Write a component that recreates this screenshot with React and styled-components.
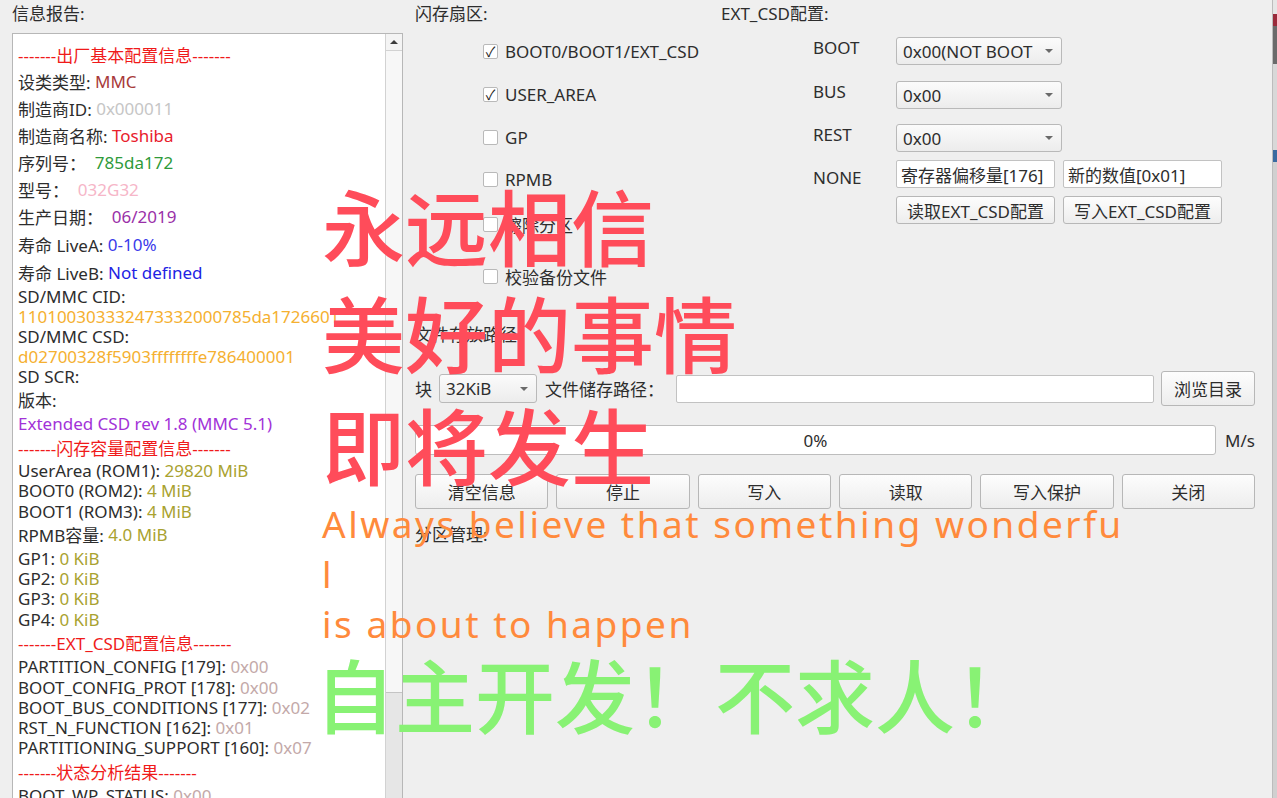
import React from "react";
import styled, { createGlobalStyle } from "styled-components";

const GlobalStyle = createGlobalStyle`
  html, body {
    margin: 0;
    padding: 0;
  }
  body {
    background: #efefef;
    font-family: "Noto Sans", "Noto Sans CJK SC", sans-serif;
    font-size: 17px;
    color: #2d2d2d;
    overflow: hidden;
  }
`;

const Window = styled.div`
  position: relative;
  display: flex;
  width: 1277px;
  height: 798px;
  overflow: hidden;
  background: #efefef;
`;

const LeftPane = styled.div`
  display: flex;
  flex-direction: column;
  flex-shrink: 0;
  width: 391px;
  padding-left: 12px;
`;

const PaneTitle = styled.div`
  flex-shrink: 0;
  height: 33px;
  line-height: 28px;
  white-space: nowrap;
`;

const TextBox = styled.div`
  display: flex;
  flex-shrink: 0;
  height: 800px;
  background: #fff;
  border: 1px solid #b7b7b7;
  border-bottom: none;
`;

const ReportText = styled.div`
  flex: 1;
  min-width: 0;
  overflow: hidden;
  padding: 7px 0 0 5px;
`;

const Line = styled.div`
  display: flex;
  align-items: center;
  height: ${(p) => p.h}px;
  white-space: nowrap;
  color: ${(p) => p.color || "#2d2d2d"};
`;

const Label = styled.span`
  white-space: pre;
`;

const Val = styled.span`
  color: ${(p) => p.color};
`;

const ScrollBar = styled.div`
  display: flex;
  flex-direction: column;
  width: 16px;
  border-left: 1px solid #d2d2d2;
  background: #e6e6e6;
`;

const ScrollArrow = styled.div`
  display: flex;
  align-items: center;
  justify-content: center;
  height: 16px;
  background: #f4f4f4;
  border-bottom: 1px solid #d2d2d2;
  &::after {
    content: "";
    border-left: 4px solid transparent;
    border-right: 4px solid transparent;
    border-bottom: 4px solid #3c3c3c;
  }
`;

const ScrollThumb = styled.div`
  height: 641px;
  background: #f7f7f7;
  border-bottom: 1px solid #c4c4c4;
`;

const Main = styled.div`
  display: flex;
  flex-direction: column;
  flex-shrink: 0;
  width: 840px;
  margin-left: 12px;
`;

const TopSection = styled.div`
  display: flex;
`;

const FlashCol = styled.div`
  display: flex;
  flex-direction: column;
  width: 306px;
`;

const ExtCol = styled.div`
  display: flex;
  flex-direction: column;
  flex: 1;
`;

const SectionTitle = styled.div`
  height: 30px;
  line-height: 28px;
  white-space: nowrap;
`;

const CheckList = styled.div`
  display: flex;
  flex-direction: column;
  padding-left: 68px;
`;

const CheckRow = styled.label`
  display: flex;
  align-items: center;
  gap: 7px;
  height: ${(p) => p.h}px;
  white-space: nowrap;
`;

const Box = styled.span`
  display: flex;
  align-items: center;
  justify-content: center;
  box-sizing: border-box;
  width: 15px;
  height: 15px;
  background: #fff;
  border: 1px solid #b9b9b9;
  border-radius: 2px;
  font-size: 14px;
  line-height: 1;
  color: #222;
`;

const ExtGrid = styled.div`
  display: grid;
  grid-template-columns: 75px 159px 159px;
  grid-template-rows: 44px 43px 36px 36px 28px;
  column-gap: 8px;
  margin: 7px 0 0 92px;
`;

const ExtLabel = styled.div`
  line-height: 22px;
  margin-top: ${(p) => p.top || 0}px;
  white-space: nowrap;
`;

const Combo = styled.div`
  display: flex;
  align-items: center;
  box-sizing: border-box;
  width: ${(p) => p.w}px;
  height: ${(p) => p.h || 28}px;
  padding: 0 8px 0 6px;
  border: 1px solid #b9b9b9;
  border-radius: 3px;
  background: linear-gradient(#fbfbfb, #ececec);
  white-space: nowrap;
  overflow: hidden;
  grid-column: ${(p) => p.span || "auto"};
  &::after {
    content: "";
    margin-left: auto;
    flex-shrink: 0;
    border-left: 4px solid transparent;
    border-right: 4px solid transparent;
    border-top: 4px solid #6a6a6a;
  }
`;

const ComboText = styled.span`
  overflow: hidden;
  margin-right: 8px;
`;

const Field = styled.div`
  display: flex;
  align-items: center;
  box-sizing: border-box;
  width: ${(p) => (p.w ? `${p.w}px` : "auto")};
  height: ${(p) => p.h || 28}px;
  padding-left: 4px;
  background: #fff;
  border: 1px solid #c2c2c2;
  border-radius: 2px;
  white-space: nowrap;
  overflow: hidden;
`;

const Button = styled.div`
  display: flex;
  align-items: center;
  justify-content: center;
  box-sizing: border-box;
  width: ${(p) => (p.w ? `${p.w}px` : "auto")};
  height: ${(p) => p.h}px;
  border: 1px solid #b7b7b7;
  border-radius: 3px;
  background: linear-gradient(#fdfdfd, #ededed);
  white-space: nowrap;
`;

const PlainText = styled.div`
  line-height: 20px;
  margin-top: ${(p) => p.top}px;
  white-space: nowrap;
`;

const PathRow = styled.div`
  display: flex;
  align-items: center;
  height: 35px;
  margin-top: 26px;
`;

const Gap = styled.span`
  flex-shrink: 0;
  width: ${(p) => p.w}px;
`;

const ProgressRow = styled.div`
  display: flex;
  align-items: center;
  margin-top: 19px;
  gap: 9px;
`;

const Progress = styled.div`
  display: flex;
  align-items: center;
  justify-content: center;
  box-sizing: border-box;
  width: 801px;
  height: 30px;
  background: #fff;
  border: 1px solid #bdbdbd;
  border-radius: 3px;
`;

const ButtonRow = styled.div`
  display: grid;
  grid-template-columns: repeat(6, 1fr);
  gap: 8px;
  margin-top: 19px;
`;

const EdgeStrip = styled.div`
  margin-left: auto;
  width: 4px;
  border-left: 1px solid #bcbcbc;
  background: linear-gradient(
    #e6e6e6 0 14px,
    #9a2a3a 14px 26px,
    #6a6a6a 26px 64px,
    #d8d8d8 64px 150px,
    #3a6aa0 150px 162px,
    #d0d0d0 162px 100%
  );
`;

const Overlay = styled.div`
  position: absolute;
  left: 322px;
  top: 183px;
  display: flex;
  flex-direction: column;
  pointer-events: none;
`;

const OverlayLine = styled.div`
  height: ${(p) => p.h}px;
  line-height: ${(p) => p.h}px;
  margin-top: ${(p) => p.top || 0}px;
  margin-left: ${(p) => p.shift || 0}px;
  font-size: ${(p) => p.size}px;
  font-weight: ${(p) => p.weight || 500};
  letter-spacing: ${(p) => p.spacing || 0}px;
  color: ${(p) => p.color};
  white-space: nowrap;
`;

const OverlayCjk = styled(OverlayLine)`
  line-height: 1;
  font-family: "Noto Sans CJK SC", sans-serif;
`;

const RED = "#f01a1a";
const OLIVE = "#a9a230";
const HEXV = "#c3a9a9";
const ORANGE = "#f5b030";

const report = [
  { h: 27, color: RED, text: "-------出厂基本配置信息-------" },
  { h: 27, label: "设类类型: ", value: "MMC", color: "#a83a3a" },
  { h: 27, label: "制造商ID: ", value: "0x000011", color: "#c6c6c6" },
  { h: 27, label: "制造商名称: ", value: "Toshiba", color: "#e8202c" },
  { h: 27, label: "序列号：  ", value: "785da172", color: "#2f9a3a" },
  { h: 27, label: "型号：  ", value: "032G32", color: "#f6b6c8" },
  { h: 27, label: "生产日期：  ", value: "06/2019", color: "#9a30a8" },
  { h: 28, label: "寿命 LiveA: ", value: "0-10%", color: "#3a3aea" },
  { h: 28, label: "寿命 LiveB: ", value: "Not defined", color: "#2222e4" },
  { h: 20, label: "SD/MMC CID:" },
  { h: 20, color: ORANGE, text: "110100303332473332000785da1726601" },
  { h: 20, label: "SD/MMC CSD:" },
  { h: 20, color: ORANGE, text: "d02700328f5903ffffffffe786400001" },
  { h: 20, label: "SD SCR:" },
  { h: 26, label: "版本:" },
  { h: 22, color: "#a232d8", text: "Extended CSD rev 1.8 (MMC 5.1)" },
  { h: 26, color: RED, text: "-------闪存容量配置信息-------" },
  { h: 20, label: "UserArea (ROM1): ", value: "29820 MiB", color: OLIVE },
  { h: 21, label: "BOOT0 (ROM2): ", value: "4 MiB", color: OLIVE },
  { h: 20, label: "BOOT1 (ROM3): ", value: "4 MiB", color: OLIVE },
  { h: 27, label: "RPMB容量: ", value: "4.0 MiB", color: OLIVE },
  { h: 20, label: "GP1: ", value: "0 KiB", color: OLIVE },
  { h: 20, label: "GP2: ", value: "0 KiB", color: OLIVE },
  { h: 21, label: "GP3: ", value: "0 KiB", color: OLIVE },
  { h: 20, label: "GP4: ", value: "0 KiB", color: OLIVE },
  { h: 26, color: RED, text: "-------EXT_CSD配置信息-------" },
  { h: 22, label: "PARTITION_CONFIG [179]: ", value: "0x00", color: HEXV },
  { h: 20, label: "BOOT_CONFIG_PROT [178]: ", value: "0x00", color: HEXV },
  { h: 20, label: "BOOT_BUS_CONDITIONS [177]: ", value: "0x02", color: HEXV },
  { h: 20, label: "RST_N_FUNCTION [162]: ", value: "0x01", color: HEXV },
  { h: 20, label: "PARTITIONING_SUPPORT [160]: ", value: "0x07", color: HEXV },
  { h: 28, color: RED, text: "-------状态分析结果-------" },
  { h: 20, label: "BOOT_WP_STATUS: ", value: "0x00", color: HEXV },
];

const partitions = [
  { name: "BOOT0/BOOT1/EXT_CSD", checked: true, h: 43 },
  { name: "USER_AREA", checked: true, h: 43 },
  { name: "GP", h: 42 },
  { name: "RPMB", h: 43 },
  { name: "擦除分区", h: 46 },
  { name: "校验备份文件", h: 58 },
];

const actions = ["清空信息", "停止", "写入", "读取", "写入保护", "关闭"];

export default function App() {
  return (
    <>
      <GlobalStyle />
      <Window>
        <LeftPane>
          <PaneTitle>信息报告:</PaneTitle>
          <TextBox>
            <ReportText>
              {report.map((r, i) =>
                r.text ? (
                  <Line key={i} h={r.h} color={r.color}>
                    {r.text}
                  </Line>
                ) : (
                  <Line key={i} h={r.h}>
                    <Label>{r.label}</Label>
                    {r.value && <Val color={r.color}>{r.value}</Val>}
                  </Line>
                )
              )}
            </ReportText>
            <ScrollBar>
              <ScrollArrow />
              <ScrollThumb />
            </ScrollBar>
          </TextBox>
        </LeftPane>

        <Main>
          <TopSection>
            <FlashCol>
              <SectionTitle>闪存扇区:</SectionTitle>
              <CheckList>
                {partitions.map((p) => (
                  <CheckRow key={p.name} h={p.h}>
                    <Box>{p.checked ? "✓" : ""}</Box>
                    {p.name}
                  </CheckRow>
                ))}
              </CheckList>
            </FlashCol>
            <ExtCol>
              <SectionTitle>EXT_CSD配置:</SectionTitle>
              <ExtGrid>
                <ExtLabel>BOOT</ExtLabel>
                <Combo w={166} span="2 / span 2">
                  <ComboText>0x00(NOT BOOT ENABLE)</ComboText>
                </Combo>
                <ExtLabel>BUS</ExtLabel>
                <Combo w={166} span="2 / span 2">
                  <ComboText>0x00</ComboText>
                </Combo>
                <ExtLabel>REST</ExtLabel>
                <Combo w={166} span="2 / span 2">
                  <ComboText>0x00</ComboText>
                </Combo>
                <ExtLabel top={7}>NONE</ExtLabel>
                <Field>寄存器偏移量[176]</Field>
                <Field>新的数值[0x01]</Field>
                <span />
                <Button h={28}>读取EXT_CSD配置</Button>
                <Button h={28}>写入EXT_CSD配置</Button>
              </ExtGrid>
            </ExtCol>
          </TopSection>

          <PlainText top={20}>文件存放路径</PlainText>
          <PathRow>
            块
            <Gap w={7} />
            <Combo w={98} h={29}>
              <ComboText>32KiB</ComboText>
            </Combo>
            <Gap w={8} />
            文件储存路径：
            <Gap w={12} />
            <Field w={478} h={28} />
            <Gap w={7} />
            <Button w={94} h={35}>
              浏览目录
            </Button>
          </PathRow>

          <ProgressRow>
            <Progress>0%</Progress>
            M/s
          </ProgressRow>

          <ButtonRow>
            {actions.map((a) => (
              <Button key={a} h={35}>
                {a}
              </Button>
            ))}
          </ButtonRow>

          <PlainText top={16}>分区管理:</PlainText>
        </Main>

        <EdgeStrip />

        <Overlay>
          <OverlayCjk size={83} h={107} color="#ff4c5a">
            永远相信
          </OverlayCjk>
          <OverlayCjk size={83} h={112} color="#ff4c5a">
            美好的事情
          </OverlayCjk>
          <OverlayCjk size={83} h={97} color="#ff4c5a">
            即将发生
          </OverlayCjk>
          <OverlayLine size={37} h={50} spacing={2.5} weight={400} color="#ff8a3c">
            Always believe that something wonderfu
          </OverlayLine>
          <OverlayLine size={37} h={50} spacing={2.5} weight={400} color="#ff8a3c">
            l
          </OverlayLine>
          <OverlayLine size={37} h={50} spacing={2.5} weight={400} color="#ff8a3c">
            is about to happen
          </OverlayLine>
          <OverlayCjk size={80} h={85} top={3} shift={-7} color="#88f274">
            自主开发！不求人！
          </OverlayCjk>
        </Overlay>
      </Window>
    </>
  );
}
